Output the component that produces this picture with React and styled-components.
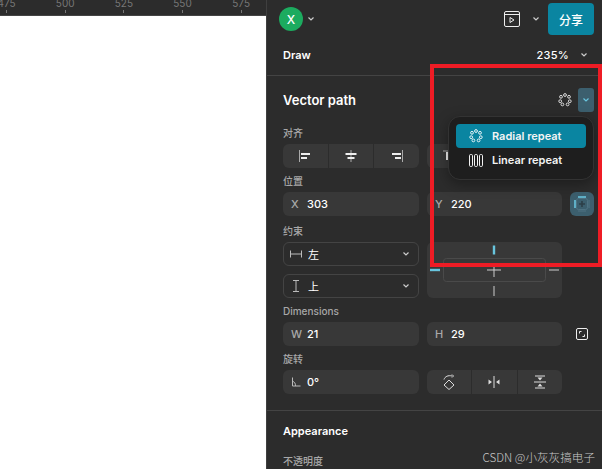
import React from "react";
import styled, { createGlobalStyle } from "styled-components";

const GlobalStyle = createGlobalStyle`
  html, body {
    margin: 0;
    padding: 0;
    height: 469px;
    overflow: hidden;
    background: #2c2c2c;
    font-family: Inter, "Noto Sans CJK SC", sans-serif;
  }
`;

const Page = styled.div`
  position: relative;
  display: flex;
  width: 602px;
  height: 469px;
  overflow: hidden;
`;

const CanvasSide = styled.div`
  width: 266px;
  display: flex;
  flex-direction: column;
  border-right: 1px solid #3f3f3f;
`;

const Ruler = styled.div`
  height: 15px;
  flex-shrink: 0;
  display: flex;
  overflow: hidden;
  background: #2c2c2c;
  border-bottom: 1px solid #444;
`;

const RulerMark = styled.div`
  flex: 0 0 58.67px;
  height: 15px;
  display: flex;
  flex-direction: column;
  align-items: center;
  color: #777;
  font-size: 10px;
  line-height: 10px;
  margin-top: -2px;

  &:first-child {
    margin-left: -22.8px;
  }

  &::after {
    content: "";
    width: 1px;
    height: 5px;
    margin-top: 2px;
    background: #777;
  }
`;

const Canvas = styled.div`
  flex: 1;
  background: #fff;
`;

const Panel = styled.div`
  width: 335px;
  flex-shrink: 0;
  background: #2c2c2c;
  color: #fff;
`;

const TopBar = styled.div`
  height: 38px;
  display: flex;
  align-items: center;
  gap: 4px;
  padding: 0 8px 0 12px;
`;

const Avatar = styled.div`
  width: 24px;
  height: 24px;
  border-radius: 50%;
  background: #1cab5f;
  color: #fff;
  font-size: 12px;
  font-weight: 500;
  display: flex;
  align-items: center;
  justify-content: center;
`;

const TopRight = styled.div`
  margin-left: auto;
  display: flex;
  align-items: center;
  gap: 12px;
`;

const ShareButton = styled.button`
  width: 46px;
  height: 32px;
  margin-left: -4px;
  border: 0;
  border-radius: 4px;
  background: #0a85a1;
  color: #fff;
  font-family: inherit;
  font-size: 12px;
  font-weight: 500;
`;

const DrawRow = styled.div`
  height: 38px;
  box-sizing: border-box;
  padding: 0 14px 4px 16px;
  display: flex;
  align-items: center;
  justify-content: space-between;
  border-bottom: 1px solid #444;
  font-size: 11px;
  font-weight: 600;
`;

const Zoom = styled.div`
  display: flex;
  align-items: center;
  gap: 11px;
  font-weight: 500;
  font-size: 11px;
  letter-spacing: 0.3px;
`;

const Section = styled.div`
  padding: 12px 8px 16px 16px;
  border-bottom: 1px solid #444;
`;

const TitleRow = styled.div`
  height: 24px;
  margin-bottom: 13px;
  display: flex;
  align-items: center;
  font-size: 13px;
  font-weight: 600;
`;

const TitleActions = styled.div`
  margin-left: auto;
  display: flex;
  align-items: center;
  gap: 6px;
`;

const RepeatToggle = styled.div`
  width: 16px;
  height: 24px;
  border-radius: 3px;
  background: #3c5f6e;
  display: flex;
  align-items: center;
  justify-content: center;
`;

const Block = styled.div`
  margin-top: ${(props) => props.$top ?? 5}px;
`;

const Label = styled.div`
  height: 16px;
  box-sizing: border-box;
  margin-bottom: 3px;
  padding-bottom: ${(props) => (props.$latin ? 0 : 2)}px;
  display: flex;
  align-items: center;
  font-size: 10px;
  font-weight: 500;
  color: #a8a8a8;
`;

const Grid = styled.div`
  display: grid;
  grid-template-columns: 136px 135px 24px;
  column-gap: 8px;
  row-gap: 8px;
`;

const Segments = styled.div`
  height: 24px;
  display: flex;
  gap: 1px;
  border-radius: 6px;
  overflow: hidden;
`;

const Segment = styled.div`
  flex: 1;
  background: #383838;
  display: flex;
  align-items: center;
  justify-content: center;
`;

const Field = styled.div`
  height: 24px;
  box-sizing: border-box;
  border-radius: 6px;
  background: #383838;
  padding-left: 8px;
  display: flex;
  align-items: center;
  font-size: 11px;
  font-weight: 500;
`;

const FieldKey = styled.span`
  width: 16px;
  color: #a8a8a8;
  display: flex;
  align-items: center;
`;

const ConstraintSelect = styled.div`
  grid-column: 1;
  height: 24px;
  box-sizing: border-box;
  border: 1px solid #444;
  border-radius: 6px;
  padding: 0 8px 0 6px;
  display: flex;
  align-items: center;
  gap: 6px;
  font-size: 11px;
`;

const SelectChevron = styled.span`
  margin-left: auto;
  display: flex;
`;

const ConstraintBox = styled.div`
  grid-column: 2;
  grid-row: 1 / span 2;
  height: 56px;
  border-radius: 6px;
  background: #383838;
`;

const LinkButton = styled.div`
  width: 24px;
  height: 24px;
  border-radius: 6px;
  background: ${(props) => (props.$on ? "#3c5f6e" : "transparent")};
  display: flex;
  align-items: center;
  justify-content: center;
`;

const AppearanceTitle = styled.div`
  margin: 12px 0 0 16px;
  height: 16px;
  display: flex;
  align-items: center;
  font-size: 11px;
  font-weight: 600;
`;

const OpacityLabel = styled(Label)`
  margin: 14px 0 0 16px;
`;

const RepeatMenu = styled.div`
  position: absolute;
  left: 448px;
  top: 116px;
  width: 146px;
  height: 64px;
  box-sizing: border-box;
  padding: 8px;
  border: 1px solid #333;
  border-radius: 12px;
  background: #1e1e1e;
  box-shadow: 0 4px 14px rgba(0, 0, 0, 0.35);
`;

const MenuItem = styled.div`
  height: 24px;
  margin: ${(props) => (props.$active ? "-1px -1px 0" : "0 -1px")};
  padding-left: 13px;
  display: flex;
  align-items: center;
  gap: 9px;
  border-radius: 4px;
  background: ${(props) => (props.$active ? "#0a85a1" : "transparent")};
  font-size: 11px;
  font-weight: 600;
  color: #f4f4f4;
`;

const RedFrame = styled.div`
  position: absolute;
  left: 430px;
  top: 64px;
  width: 172px;
  height: 203px;
  box-sizing: border-box;
  border: 4.5px solid #ee1c25;
  pointer-events: none;
`;

const Watermark = styled.div`
  position: absolute;
  right: 7px;
  bottom: 4px;
  font-size: 11.6px;
  line-height: 16px;
  color: #c8c8c8;
  font-family: "Noto Sans CJK SC", sans-serif;
  font-weight: 300;
`;

const Chevron = ({ color = "#ccc" }) => (
  <svg width="8" height="6" viewBox="0 0 8 6" fill="none">
    <path d="M1.5 1.5 4 4l2.5-2.5" stroke={color} strokeWidth="1.2" />
  </svg>
);

const RadialIcon = ({ color = "#ddd" }) => (
  <svg width="14" height="14" viewBox="0 0 14 14" fill="none" stroke={color} strokeWidth="1">
    <circle cx="7" cy="2" r="1.4" />
    <circle cx="11" cy="3.8" r="1.4" />
    <circle cx="11.8" cy="8.2" r="1.4" />
    <circle cx="9.6" cy="11.4" r="1.4" />
    <circle cx="4.4" cy="11.4" r="1.4" />
    <circle cx="2.2" cy="8.2" r="1.4" />
    <circle cx="3" cy="3.8" r="1.4" />
  </svg>
);

const LinearIcon = () => (
  <svg width="14" height="13" viewBox="0 0 14 13" fill="none" stroke="#f2f2f2" strokeWidth="1">
    <rect x="0.5" y="0.5" width="3" height="12" rx="1.2" />
    <rect x="5.5" y="0.5" width="3" height="12" rx="1.2" />
    <rect x="10.5" y="0.5" width="3" height="12" rx="1.2" />
  </svg>
);

const PlayIcon = () => (
  <svg width="16" height="16" viewBox="0 0 16 16" fill="none" stroke="#eee">
    <rect x="0.5" y="0.5" width="15" height="15" rx="1.5" />
    <path d="M0.5 3.5h15" />
    <path d="M6 6.5v5l4-2.5z" />
  </svg>
);

const AlignIcon = ({ kind }) => {
  const paths = {
    left: { line: "M1.5 1v12", a: "M3 5h9", b: "M3 9h6" },
    center: { line: "M7 1v12", a: "M1.5 5h11", b: "M3.5 9h7" },
    right: { line: "M12.5 1v12", a: "M2 5h9", b: "M5 9h6" },
    vertical: { line: "M1 2h12", a: "M5 3v8", b: "M9 3v5" },
  }[kind];
  return (
    <svg width="14" height="14" viewBox="0 0 14 14" fill="none">
      <path d={paths.line} stroke="#aaa" />
      <path d={paths.a} stroke="#eee" strokeWidth="2" />
      <path d={paths.b} stroke="#eee" strokeWidth="2" />
    </svg>
  );
};

const ConstraintWidget = () => (
  <svg width="135" height="56" viewBox="0 0 135 56" fill="none">
    <rect x="16.5" y="16.5" width="102" height="23" rx="3" stroke="#4a4a4a" />
    <path d="M60 28h14M67 24v11" stroke="#ccc" />
    <path d="M67 44v10" stroke="#ccc" />
    <path d="M122 28h10" stroke="#ccc" />
    <path d="M67 3.5v9" stroke="#68c5de" strokeWidth="2.4" />
    <path d="M3 28h10" stroke="#68c5de" strokeWidth="2.4" />
  </svg>
);

const HorizontalIcon = () => (
  <svg width="12" height="12" viewBox="0 0 12 12" fill="none" stroke="#bbb">
    <path d="M.5 2.5v7M11.5 2.5v7M.5 6h11" />
  </svg>
);

const VerticalIcon = () => (
  <svg width="12" height="12" viewBox="0 0 12 12" fill="none" stroke="#bbb">
    <path d="M3 .5h6M3 11.5h6M6 .5v11" />
  </svg>
);

const ClipIcon = () => (
  <svg width="24" height="24" viewBox="0 0 24 24" fill="none">
    <rect x="6.5" y="6.5" width="11" height="11" rx="2" stroke="#4e7282" />
    <path d="M8 5h8" stroke="#68c5de" strokeWidth="1.6" />
    <path d="M5 8v8" stroke="#68c5de" strokeWidth="1.6" />
    <path d="M8 19h8M19 8v8" stroke="#4e7282" strokeWidth="1.2" />
    <path d="M12 9v6M9 12h6" stroke="#2c3f48" strokeWidth="1.6" />
  </svg>
);

const ExpandIcon = () => (
  <svg width="12" height="12" viewBox="0 0 12 12" fill="none" stroke="#eee">
    <rect x="0.5" y="0.5" width="11" height="11" rx="1.5" />
    <path d="M3.5 5.5v-2h2M8.5 6.5v2h-2" />
  </svg>
);

const AngleIcon = () => (
  <svg width="10" height="10" viewBox="0 0 10 10" fill="none" stroke="#bbb">
    <path d="M1.5 .5V9h8M1.5 4.500c2 0 3 1.800 3 4.500" />
  </svg>
);

const RotateIcon = () => (
  <svg width="14" height="16" viewBox="0 0 14 16" fill="none" stroke="#ddd">
    <path d="M7 6l5 5-5 4.500L2 11z" />
    <path d="M2 5.500C3 2.500 6 1 10 2M10 .5 11.500 2 10 3.500" />
  </svg>
);

const FlipHorizontalIcon = () => (
  <svg width="14" height="14" viewBox="0 0 14 14" fill="none">
    <path d="M7 1v12" stroke="#ddd" />
    <path d="M1.500 4.500v5L5 7zM12.500 4.500v5L9 7z" fill="#ddd" />
  </svg>
);

const FlipVerticalIcon = () => (
  <svg width="14" height="14" viewBox="0 0 14 14" fill="none">
    <path d="M1 7h12M2 1h10M2 13h10" stroke="#ddd" />
    <path d="M4.500 2.500h5L7 5.500zM4.500 11.500h5L7 8.500z" fill="#ddd" />
  </svg>
);

const RULER_MARKS = [475, 500, 525, 550, 575];

const App = () => (
  <Page>
    <GlobalStyle />
    <CanvasSide>
      <Ruler>
        {RULER_MARKS.map((mark) => (
          <RulerMark key={mark}>{mark}</RulerMark>
        ))}
      </Ruler>
      <Canvas />
    </CanvasSide>

    <Panel>
      <TopBar>
        <Avatar>X</Avatar>
        <Chevron />
        <TopRight>
          <PlayIcon />
          <Chevron />
          <ShareButton>分享</ShareButton>
        </TopRight>
      </TopBar>

      <DrawRow>
        Draw
        <Zoom>
          235%
          <Chevron />
        </Zoom>
      </DrawRow>

      <Section>
        <TitleRow>
          Vector path
          <TitleActions>
            <RadialIcon />
            <RepeatToggle>
              <Chevron color="#68c5de" />
            </RepeatToggle>
          </TitleActions>
        </TitleRow>

        <Block $top={0}>
          <Label>对齐</Label>
          <Grid>
            <Segments>
              <Segment><AlignIcon kind="left" /></Segment>
              <Segment><AlignIcon kind="center" /></Segment>
              <Segment><AlignIcon kind="right" /></Segment>
            </Segments>
            <Segments>
              <Segment><AlignIcon kind="vertical" /></Segment>
              <Segment><AlignIcon kind="vertical" /></Segment>
              <Segment><AlignIcon kind="vertical" /></Segment>
            </Segments>
          </Grid>
        </Block>

        <Block>
          <Label>位置</Label>
          <Grid>
            <Field><FieldKey>X</FieldKey>303</Field>
            <Field><FieldKey>Y</FieldKey>220</Field>
            <LinkButton $on><ClipIcon /></LinkButton>
          </Grid>
        </Block>

        <Block $top={7}>
          <Label>约束</Label>
          <Grid>
            <ConstraintSelect>
              <HorizontalIcon />
              左
              <SelectChevron><Chevron /></SelectChevron>
            </ConstraintSelect>
            <ConstraintBox><ConstraintWidget /></ConstraintBox>
            <ConstraintSelect>
              <VerticalIcon />
              上
              <SelectChevron><Chevron /></SelectChevron>
            </ConstraintSelect>
          </Grid>
        </Block>

        <Block>
          <Label $latin>Dimensions</Label>
          <Grid>
            <Field><FieldKey>W</FieldKey>21</Field>
            <Field><FieldKey>H</FieldKey>29</Field>
            <LinkButton><ExpandIcon /></LinkButton>
          </Grid>
        </Block>

        <Block>
          <Label>旋转</Label>
          <Grid>
            <Field><FieldKey><AngleIcon /></FieldKey>0°</Field>
            <Segments>
              <Segment><RotateIcon /></Segment>
              <Segment><FlipHorizontalIcon /></Segment>
              <Segment><FlipVerticalIcon /></Segment>
            </Segments>
          </Grid>
        </Block>
      </Section>

      <AppearanceTitle>Appearance</AppearanceTitle>
      <OpacityLabel>不透明度</OpacityLabel>
    </Panel>

    <RepeatMenu>
      <MenuItem $active><RadialIcon color="#e6f4f8" />Radial repeat</MenuItem>
      <MenuItem><LinearIcon />Linear repeat</MenuItem>
    </RepeatMenu>
    <RedFrame />
    <Watermark>CSDN @小灰灰搞电子</Watermark>
  </Page>
);

export default App;
